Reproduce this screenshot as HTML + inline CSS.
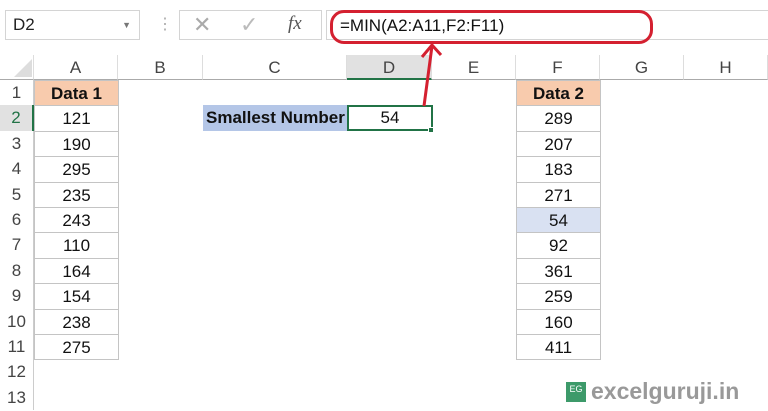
<!DOCTYPE html><html><head><style>
body{margin:0;width:768px;height:411px;background:#fff;font-family:"Liberation Sans",sans-serif;position:relative;overflow:hidden}
.a{position:absolute;box-sizing:border-box}
.ch{position:absolute;top:55px;height:25px;font-size:17px;color:#444;text-align:center;line-height:25px;border-right:1px solid #ddd;border-bottom:1px solid #aaa;box-sizing:border-box}
.rh{position:absolute;left:0;width:34px;font-size:17px;color:#444;text-align:center;border-right:1px solid #ccc;box-sizing:border-box}
.c{position:absolute;font-size:17px;color:#111;text-align:center;box-sizing:border-box;border:1px solid #c4c4c4}
</style></head><body>
<div class="a" style="left:5px;top:10px;width:135px;height:30px;border:1px solid #d4d4d4;font-size:17px;line-height:28px;padding-left:7px;color:#222">D2<span style="position:absolute;right:8px;top:0;font-size:9px;color:#777">▼</span></div>
<div class="a" style="left:157px;top:14px;color:#aaa;font-size:16px">⋮</div>
<div class="a" style="left:179px;top:10px;width:143px;height:30px;border:1px solid #d4d4d4"></div>
<div class="a" style="left:193px;top:12px;font-size:22px;color:#aaa">✕</div>
<div class="a" style="left:240px;top:12px;font-size:22px;color:#bbb">✓</div>
<div class="a" style="left:288px;top:13px;font-size:19px;color:#555;font-family:'Liberation Serif',serif;font-style:italic">fx</div>
<div class="a" style="left:326px;top:10px;width:442px;height:30px;border:1px solid #d4d4d4;border-right:none"></div>
<div class="a" style="left:330px;top:10px;width:323px;height:34px;border:3px solid #d42030;border-radius:14px"></div>
<div class="a" style="left:340px;top:16px;font-size:17px;color:#111">=MIN(A2:A11,F2:F11)</div>
<div class="a" style="left:0;top:55px;width:34px;height:25px;border-bottom:1px solid #aaa;border-right:1px solid #ddd"></div>
<div class="ch" style="left:34px;width:84px">A</div>
<div class="ch" style="left:118px;width:85px">B</div>
<div class="ch" style="left:203px;width:144px">C</div>
<div class="ch" style="left:347px;width:85px;background:#e1e1e1;border-bottom:2px solid #217346">D</div>
<div class="ch" style="left:432px;width:84px">E</div>
<div class="ch" style="left:516px;width:84px">F</div>
<div class="ch" style="left:600px;width:84px">G</div>
<div class="ch" style="left:684px;width:84px">H</div>
<div id="g"></div>
<div class="c" style="left:203px;top:105px;width:144px;height:26px;background:#b4c6e7;border:none;font-weight:bold;line-height:26px;text-align:left;padding-left:3px">Smallest Number</div>
<div class="c" style="left:347px;top:105px;width:86px;height:26px;border:2px solid #217346;line-height:22px">54</div>
<div class="a" style="left:428px;top:127px;width:6px;height:6px;background:#217346;border:1px solid #fff"></div>
<svg class="a" style="left:0;top:0;z-index:5" width="768" height="411"><path d="M424 106 L432 46 M422 57 L432 45 L441 55" stroke="#d42030" stroke-width="3" fill="none"/><path d="M14 77 L32 77 L32 59 Z" fill="#ddd"/></svg>
<div class="a" style="left:566px;top:382px;width:20px;height:20px;background:#3d9a6a;color:#fff;font-size:9px;text-align:center;line-height:14px">EG</div>
<div class="a" style="left:591px;top:378px;font-size:23px;font-weight:bold;color:#999">excelguruji.in</div>
<script>
var a=[121,190,295,235,243,110,164,154,238,275],f=[289,207,183,271,54,92,361,259,160,411],h='';
for(var i=0;i<13;i++){var t=80+i*25.4;h+='<div class="rh" style="top:'+t+'px;height:25.4px;line-height:25px;'+(i==1?'background:#e1e1e1;color:#217346;border-right:2px solid #217346':'')+'">'+(i+1)+'</div>';
if(i<11){var v1=i==0?'Data 1':a[i-1],v2=i==0?'Data 2':f[i-1],s=i==0?'background:#f8cbad;font-weight:bold;':'';
h+='<div class="c" style="left:34px;top:'+t+'px;width:85px;height:26.4px;line-height:25px;'+s+'">'+v1+'</div>';
h+='<div class="c" style="left:516px;top:'+t+'px;width:85px;height:26.4px;line-height:25px;'+s+(i==5?'background:#d9e1f2;':'')+'">'+v2+'</div>';}}
document.getElementById('g').innerHTML=h;
</script>
</body></html>
